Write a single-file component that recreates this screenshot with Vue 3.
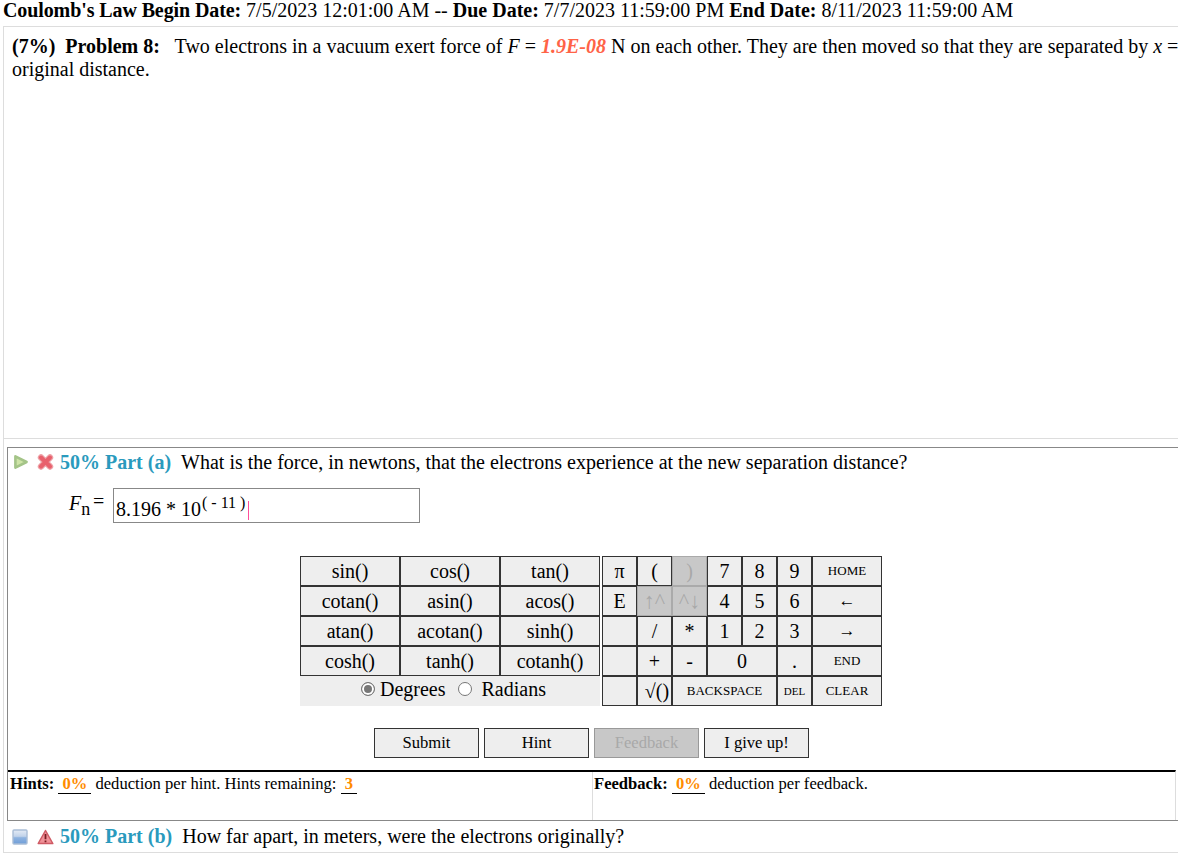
<script setup>
const fnKeys = ['sin()','cos()','tan()','cotan()','asin()','acos()','atan()','acotan()','sinh()','cosh()','tanh()','cotanh()']
const keys = [
  { t: 'π' }, { t: '(' }, { t: ')', off: true }, { t: '7' }, { t: '8' }, { t: '9' }, { t: 'HOME', sm: true },
  { t: 'E' }, { t: '↑^', off: true, big: true }, { t: '^↓', off: true, big: true }, { t: '4' }, { t: '5' }, { t: '6' }, { t: '←', arrow: true },
  { t: '' }, { t: '/' }, { t: '*' }, { t: '1' }, { t: '2' }, { t: '3' }, { t: '→', arrow: true },
  { t: '' }, { t: '+' }, { t: '-' }, { t: '0', span: 2 }, { t: '.' }, { t: 'END', sm: true },
  { t: '' }, { t: '√()', root: true }, { t: 'BACKSPACE', span: 3, sm: true }, { t: 'DEL', xs: true }, { t: 'CLEAR', sm: true }
]
</script>

<template>
  <div class="page">
    <div class="title">
      <b class="tight">Coulomb's Law Begin Date:</b> 7/5/2023 12:01:00 AM -- <b>Due Date:</b> 7/7/2023 11:59:00 PM <b>End Date:</b> 8/11/2023 11:59:00 AM
    </div>
    <div class="frame">
      <div class="problem">
        <div class="line"><b>(7%)&nbsp; Problem 8:</b>&nbsp;&nbsp; Two electrons in a vacuum exert force of <i>F</i> = <b class="given">1.9E-08</b> N on each other. They are then moved so that they are separated by <i>x</i> =</div>
        <div class="line">original distance.</div>
      </div>
      <div class="part">
        <div class="part-head">
          <svg class="ico" width="16" height="16" viewBox="0 0 16 16">
            <path d="M2.4 2.4 L13.6 8 L2.4 13.6 Z" fill="#cfe5a8" stroke="#a4c488" stroke-width="2.6" stroke-linejoin="round" />
          </svg>
          <svg class="ico cross" width="17" height="16" viewBox="0 0 17 16">
            <path d="M4 3.5 L13 12.5 M13 3.5 L4 12.5" stroke="#eda0a6" stroke-width="6.4" stroke-linecap="round" />
            <path d="M4 3.5 L13 12.5 M13 3.5 L4 12.5" stroke="#e8606c" stroke-width="4" stroke-linecap="round" />
          </svg>
          <b class="part-label">50% Part (a)</b>
          <span class="q">What is the force, in newtons, that the electrons experience at the new separation distance?</span>
        </div>
        <div class="answer">
          <span class="var"><i>F</i><sub>n</sub></span>
          <span class="eq">=</span>
          <div class="input">8.196 * 10<sup>( - 11 )</sup><span class="caret"></span></div>
        </div>
        <div class="pad">
          <div class="fn">
            <button v-for="k in fnKeys" :key="k" class="key">{{ k }}</button>
            <div class="mode">
              <span class="radio on"></span><span class="mode-a">Degrees</span><span class="radio second"></span><span class="mode-b">Radians</span>
            </div>
          </div>
          <div class="num">
            <button
              v-for="(k, i) in keys"
              :key="i"
              class="key"
              :class="{ off: k.off, sm: k.sm, xs: k.xs, arrow: k.arrow, big: k.big, root: k.root, wide2: k.span === 2, wide3: k.span === 3 }"
            >{{ k.t }}</button>
          </div>
        </div>
        <div class="actions">
          <button class="act">Submit</button>
          <button class="act">Hint</button>
          <button class="act dis">Feedback</button>
          <button class="act">I give up!</button>
        </div>
        <div class="info">
          <div class="cell hints"><b>Hints:</b> <b class="pct">0%</b> deduction per hint. Hints remaining: <b class="pct">3</b></div>
          <div class="cell fb"><b>Feedback:</b> <b class="pct">0%</b> deduction per feedback.</div>
        </div>
      </div>
      <div class="part-b">
        <svg class="ico" width="16" height="16" viewBox="0 0 16 16">
          <defs>
            <linearGradient id="blueFill" x1="0" y1="0" x2="0" y2="1">
              <stop offset="0" stop-color="#e4ebf5" />
              <stop offset="0.45" stop-color="#c2d3ea" />
              <stop offset="0.55" stop-color="#8fb3e0" />
              <stop offset="1" stop-color="#6f9ed8" />
            </linearGradient>
          </defs>
          <rect x="1" y="1" width="14" height="14" rx="1" fill="url(#blueFill)" stroke="#a9bdd6" stroke-width="1.4" />
        </svg>
        <svg class="ico warn" width="17" height="16" viewBox="0 0 17 16">
          <path d="M8.5 1.5 L15.8 14.5 L1.2 14.5 Z" fill="#ef9097" stroke="#cf5a64" stroke-width="1.5" stroke-linejoin="round" />
          <path d="M8.5 5 V10.3 M8.5 11.4 V13.3" stroke="#7a1c22" stroke-width="1.8" />
        </svg>
        <b class="part-label">50% Part (b)</b>
        <span class="q">How far apart, in meters, were the electrons originally?</span>
      </div>
    </div>
  </div>
</template>

<style scoped>
.page {
  width: 1178px;
  height: 854px;
  overflow: hidden;
  background: #fff;
  color: #000;
  font-family: "Liberation Serif", serif;
  font-size: 20px;
}
.title {
  height: 26px;
  line-height: 20px;
  padding-left: 3px;
  white-space: nowrap;
}
.tight {
  letter-spacing: -0.1px;
}
.frame {
  margin-left: 3px;
  width: 1175px;
  height: 827px;
  box-sizing: border-box;
  border-top: 1px solid #ddd;
  border-left: 1px solid #ddd;
  border-bottom: 1px solid #ddd;
}
.problem {
  box-sizing: border-box;
  height: 412px;
  border-bottom: 1px solid #ddd;
  padding: 8px 0 0 8px;
}
.line {
  white-space: nowrap;
  line-height: 23px;
}
.given {
  color: #ff6347;
  font-style: italic;
}
.part {
  margin: 8px 0 0 3px;
  width: 1171px;
  height: 374px;
  box-sizing: border-box;
  border: 1px solid #888;
  border-right: none;
  display: flex;
  flex-direction: column;
}
.part-head {
  display: flex;
  align-items: center;
  height: 24px;
  margin-top: 2px;
  padding-left: 5px;
  white-space: nowrap;
}
.ico {
  flex: none;
}
.cross {
  margin-left: 8px;
}
.part-label {
  color: #2a9abd;
  margin-left: 6px;
}
.q {
  margin-left: 10px;
}
.answer {
  display: flex;
  margin-top: 14px;
  margin-left: 61px;
  height: 35px;
}
.var {
  font-size: 20px;
  line-height: 30px;
  width: 24px;
  white-space: nowrap;
}
.var sub {
  font-size: 18px;
  line-height: 0;
}
.eq {
  line-height: 27px;
  width: 20px;
}
.input {
  width: 307px;
  height: 35px;
  box-sizing: border-box;
  border: 1px solid #888;
  padding: 8px 0 0 2px;
  font-size: 20px;
  line-height: 24px;
  white-space: nowrap;
  display: flex;
  align-items: flex-start;
}
.input sup {
  font-size: 16px;
  line-height: 16px;
  margin-top: -2px;
  margin-left: 1px;
  white-space: pre;
}
.caret {
  width: 1px;
  height: 19px;
  background: #ff4f9a;
  margin-top: 4px;
  margin-left: 3px;
}
.pad {
  display: flex;
  margin: 33px 0 0 292px;
  gap: 2px;
}
.fn {
  display: grid;
  grid-template-columns: repeat(3, 100px);
  grid-auto-rows: 30px;
  width: 300px;
}
.num {
  display: grid;
  grid-template-columns: repeat(6, 35px) 70px;
  grid-auto-rows: 30px;
}
.key {
  box-sizing: border-box;
  border: 1px solid #333;
  background: #eee;
  color: #000;
  font-family: "Liberation Serif", serif;
  font-size: 20px;
  padding: 0;
  margin: 0;
  line-height: 26px;
  white-space: nowrap;
  overflow: hidden;
  border-radius: 0;
}
.key.sm {
  font-size: 13px;
}
.key.xs {
  font-size: 11px;
}
.key.arrow {
  font-size: 17px;
}
.key.big {
  font-size: 22px;
}
.key.root {
  padding-left: 5px;
}
.key.wide2 {
  grid-column: span 2;
}
.key.wide3 {
  grid-column: span 3;
}
.key.off {
  background: #c8c8c8;
  color: #a8a8a8;
  border-color: #aaa;
}
.mode {
  grid-column: 1 / 4;
  background: #eee;
  display: flex;
  align-items: center;
  padding-left: 61px;
  padding-bottom: 3px;
  white-space: nowrap;
}
.radio {
  width: 14px;
  height: 14px;
  flex: none;
  box-sizing: border-box;
  border: 1px solid #777;
  border-radius: 50%;
  background: #fff;
  margin-top: -2px;
}
.radio.on {
  background: #777;
  box-shadow: inset 0 0 0 2px #fff;
}
.mode-a {
  margin-left: 5px;
}
.radio.second {
  margin-left: 12px;
}
.mode-b {
  margin-left: 10px;
}
.actions {
  display: flex;
  gap: 5px;
  margin: 22px 0 0 366px;
}
.act {
  width: 105px;
  height: 30px;
  box-sizing: border-box;
  border: 1px solid #333;
  background: #eee;
  color: #000;
  font-family: "Liberation Serif", serif;
  font-size: 16.6px;
  padding: 0;
  border-radius: 0;
}
.act.dis {
  background: #c8c8c8;
  color: #a9a9a9;
  border-color: #999;
}
.info {
  margin-top: 12px;
  width: 1168px;
  height: 50px;
  box-sizing: border-box;
  border-top: 2px solid #000;
  border-right: 1px solid #ddd;
  display: flex;
  font-size: 16.6px;
  line-height: 22px;
}
.cell {
  white-space: nowrap;
}
.hints {
  width: 584px;
  box-sizing: border-box;
  padding-left: 2px;
  padding-top: 1px;
}
.fb {
  flex: 1;
  border-left: 1px solid #ddd;
  padding-left: 1px;
  padding-top: 1px;
}
.pct {
  color: #ff8c00;
  display: inline-block;
  padding: 0 4px;
  border-bottom: 1px solid #000;
  line-height: 19px;
}
.part-b {
  height: 31px;
  display: flex;
  align-items: center;
  padding-left: 8px;
  white-space: nowrap;
}
.warn {
  margin-left: 9px;
}
</style>
